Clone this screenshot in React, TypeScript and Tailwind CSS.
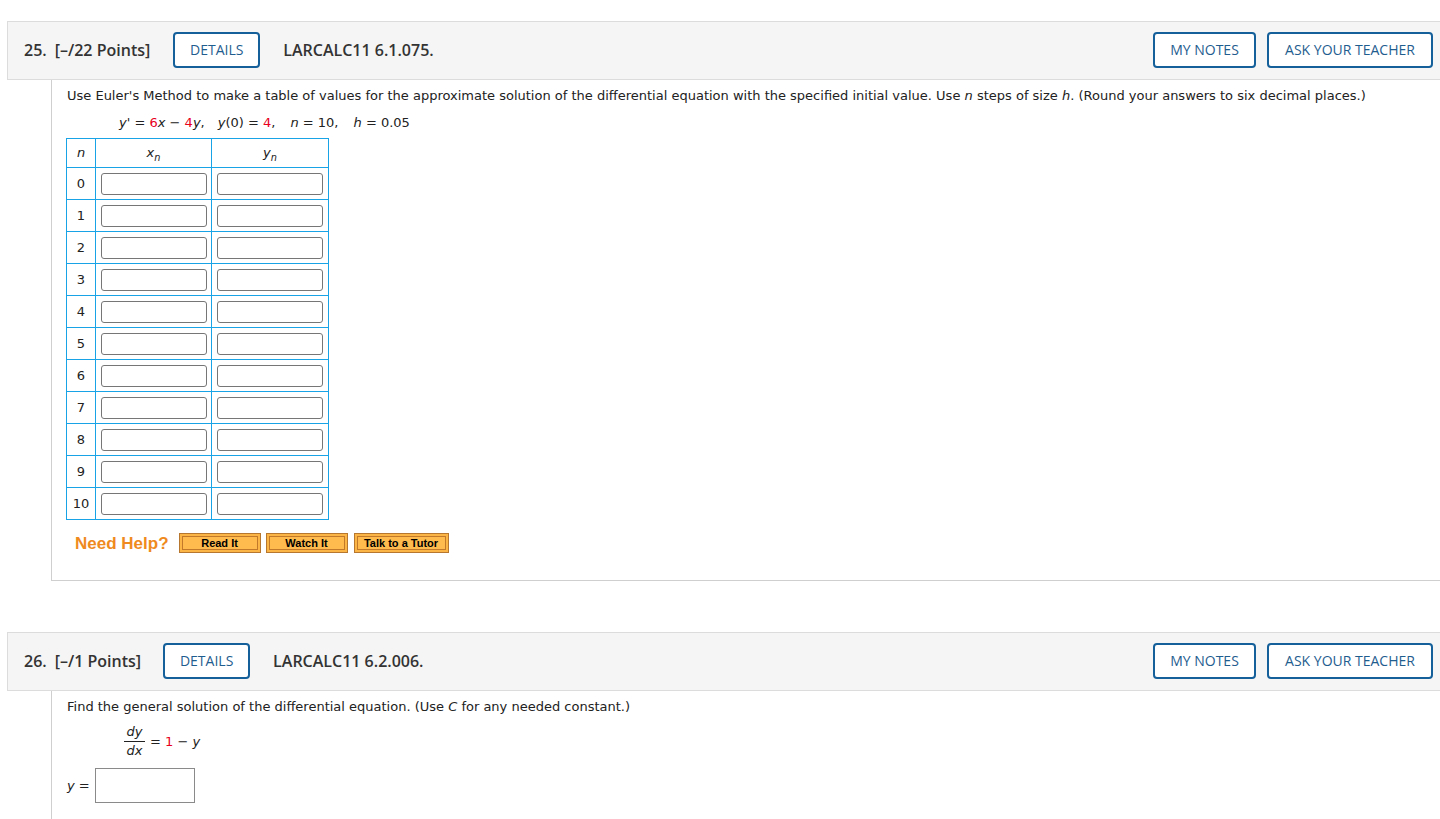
const body = { fontFamily: '"DejaVu Sans", Verdana, sans-serif' };
const head = { fontFamily: '"Open Sans", "Liberation Sans", sans-serif' };

function OutlineButton({ label, className = "" }: { label: string; className?: string }) {
  return (
    <button
      className={`h-[36px] rounded-[4px] border-2 border-[#15609a] bg-white text-[14px] text-[#1f5d8f] ${className}`}
      style={head}
    >
      {label}
    </button>
  );
}

function QuestionHeader({ num, points, code, detailsGap }: { num: string; points: string; code: string; detailsGap: string }) {
  return (
    <div className="flex h-[59px] items-center border border-r-0 border-[#dcdcdc] bg-[#f5f5f5] pb-[2px] pl-[16px] pr-[7px]" style={head}>
      <span className="text-[16px] font-semibold text-[#333]">{num}</span>
      <span className="ml-[8px] text-[16px] font-semibold text-[#333]">{points}</span>
      <OutlineButton label="DETAILS" className={`w-[87px] ${detailsGap}`} />
      <span className="ml-[23px] text-[16px] font-semibold text-[#333]">{code}</span>
      <div className="ml-auto flex gap-[11px]">
        <OutlineButton label="MY NOTES" className="w-[103px]" />
        <OutlineButton label="ASK YOUR TEACHER" className="w-[166px]" />
      </div>
    </div>
  );
}

function Red({ children }: { children: React.ReactNode }) {
  return <span className="text-[#e8001c]">{children}</span>;
}

function TextBox() {
  return <div className="mx-auto h-[22px] w-[106px] rounded-[3px] border border-[#767676] bg-white" />;
}

function HelpButton({ label, w }: { label: string; w: string }) {
  return (
    <button
      className={`flex h-[20px] ${w} items-center justify-center border border-[#b8772f] bg-[#fbb446] p-[2px]`}
    >
      <span
        className="flex h-full w-full items-center justify-center border border-[#c27a2a] bg-[#ffbb4d] text-[11px] font-bold text-black"
        style={{ fontFamily: '"Liberation Sans", Arial, sans-serif' }}
      >
        {label}
      </span>
    </button>
  );
}

export default function App() {
  const rows = Array.from({ length: 11 }, (_, i) => i);
  return (
    <div className="min-h-screen bg-white pl-[7px] pt-[21px] text-[13px] text-[#222]" style={body}>
      {/* Question 25 */}
      <QuestionHeader num="25." points="[–/22 Points]" code="LARCALC11 6.1.075." detailsGap="ml-[23px]" />
      <div className="ml-[44px] border-b border-l border-[#cfcfcf] pb-[27px] pl-[15px] pt-[7px]">
        <p className="leading-[18px]">
          Use Euler's Method to make a table of values for the approximate solution of the differential equation with the
          specified initial value. Use <i>n</i> steps of size <i>h</i>. (Round your answers to six decimal places.)
        </p>
        <p className="ml-[52px] mt-[9px] leading-[18px]">
          <i>y</i>' = <Red>6</Red><i>x</i> − <Red>4</Red><i>y</i>,
          <span className="ml-[13px]">
            <i>y</i>(0) = <Red>4</Red>,
          </span>
          <span className="ml-[15px]">
            <i>n</i> = 10,
          </span>
          <span className="ml-[15px]">
            <i>h</i> = 0.05
          </span>
        </p>
        <table className="-ml-px mt-[6px] border-collapse">
          <thead>
            <tr className="h-[29px]">
              <th className="w-[29px] border border-[#17a3e6] font-normal italic">n</th>
              <th className="w-[116px] border border-[#17a3e6] font-normal">
                <i>x</i>
                <sub className="relative top-[4px] italic">n</sub>
              </th>
              <th className="w-[117px] border border-[#17a3e6] font-normal">
                <i>y</i>
                <sub className="relative top-[4px] italic">n</sub>
              </th>
            </tr>
          </thead>
          <tbody>
            {rows.map((r) => (
              <tr key={r} className="h-[32px]">
                <td className="border border-[#17a3e6] text-center">{r}</td>
                <td className="border border-[#17a3e6]">
                  <TextBox />
                </td>
                <td className="border border-[#17a3e6]">
                  <TextBox />
                </td>
              </tr>
            ))}
          </tbody>
        </table>
        <div className="mt-[13px] flex h-[20px] items-center">
          <span
            className="ml-[8px] mr-[10px] text-[17px] font-bold leading-none text-[#ef8a1e]"
            style={{ fontFamily: '"Liberation Sans", Arial, sans-serif' }}
          >
            Need Help?
          </span>
          <div className="flex gap-[5px]">
            <HelpButton label="Read It" w="w-[82px]" />
            <HelpButton label="Watch It" w="w-[82px]" />
            <div className="ml-[1px]">
              <HelpButton label="Talk to a Tutor" w="w-[95px]" />
            </div>
          </div>
        </div>
      </div>

      <div className="h-[51px]" />

      {/* Question 26 */}
      <QuestionHeader num="26." points="[–/1 Points]" code="LARCALC11 6.2.006." detailsGap="ml-[22px]" />
      <div className="ml-[44px] border-l border-[#cfcfcf] pb-[40px] pl-[15px] pt-[7px]">
        <p className="leading-[18px]">
          Find the general solution of the differential equation. (Use <i>C</i> for any needed constant.)
        </p>
        <div className="ml-[57px] mt-[8px] flex items-center">
          <div className="flex flex-col items-center">
            <span className="px-[1px] pb-[1px] italic leading-[16px]">dy</span>
            <span className="h-px w-[21px] bg-[#222]" />
            <span className="px-[1px] pt-[1px] italic leading-[16px]">dx</span>
          </div>
          <span className="ml-[5px]">
            = <Red>1</Red> − <i>y</i>
          </span>
        </div>
        <div className="mt-[9px] flex items-center">
          <span>
            <i>y</i> =
          </span>
          <div className="ml-[5px] h-[35px] w-[100px] border border-[#8a8a8a] bg-white" />
        </div>
      </div>
    </div>
  );
}
